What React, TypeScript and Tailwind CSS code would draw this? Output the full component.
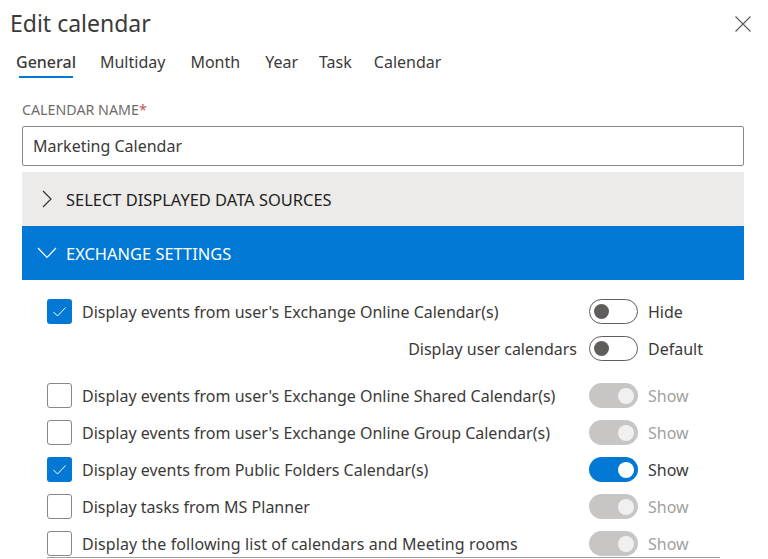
const tabs = [
  { name: "General", cls: "" },
  { name: "Multiday", cls: "ml-[24px]" },
  { name: "Month", cls: "ml-[25px]" },
  { name: "Year", cls: "ml-[25px]" },
  { name: "Task", cls: "ml-[21px]" },
  { name: "Calendar", cls: "ml-[22px]" },
];

const rows = [
  { label: "Display events from user's Exchange Online Shared Calendar(s)", state: "disabled" },
  { label: "Display events from user's Exchange Online Group Calendar(s)", state: "disabled" },
  { label: "Display events from Public Folders Calendar(s)", state: "on", checked: true },
  { label: "Display tasks from MS Planner", state: "disabled" },
  { label: "Display the following list of calendars and Meeting rooms", state: "disabled", cls: "tracking-[0.09px]" },
];

function Checkbox({ checked }: { checked?: boolean }) {
  if (checked) {
    return (
      <div className="flex h-[25px] w-[25px] shrink-0 items-center justify-center rounded-[3px] bg-[#0078d4]">
        <svg width="15" height="15" viewBox="0 0 15 15" fill="none" stroke="#fff" strokeWidth="1">
          <path d="M1.5 8 L5.5 12 L13.5 3.5" />
        </svg>
      </div>
    );
  }
  return <div className="h-[25px] w-[25px] shrink-0 rounded-[3px] border border-[#8a8886] bg-white" />;
}

function Toggle({ state, text }: { state: string; text: string }) {
  return (
    <div className="flex w-[155px] shrink-0 items-center gap-[10px]">
      {state === "off" && (
        <div className="flex h-[25px] w-[49px] items-center rounded-full border border-[#605e5c] bg-white pl-[4px]">
          <div className="h-[15px] w-[15px] rounded-full bg-[#605e5c]" />
        </div>
      )}
      {state === "on" && (
        <div className="flex h-[25px] w-[49px] items-center justify-end rounded-full bg-[#0078d4] pr-[4px]">
          <div className="h-[16px] w-[16px] rounded-full bg-white" />
        </div>
      )}
      {state === "disabled" && (
        <div className="flex h-[25px] w-[49px] items-center justify-end rounded-full bg-[#c8c6c4] pr-[4px]">
          <div className="h-[16px] w-[16px] rounded-full bg-[#f0f0f0]" />
        </div>
      )}
      <span className={state === "disabled" ? "text-[#a19f9d]" : "text-[#3b3a39]"}>{text}</span>
    </div>
  );
}

function Row({ label, state, text, checked, cls = "" }: { label: string; state: string; text: string; checked?: boolean; cls?: string }) {
  return (
    <div className="flex h-[37px] items-center">
      <Checkbox checked={checked} />
      <div className={`ml-[10px] flex-1 whitespace-nowrap text-[#3b3a39] ${cls}`}>{label}</div>
      <Toggle state={state} text={text} />
    </div>
  );
}

export default function App() {
  return (
    <div className="h-[559px] w-[768px] overflow-hidden bg-white font-['Noto_Sans',sans-serif] text-[#3b3a39]">
      <div className="flex h-[47px] items-center justify-between pl-[10px] pr-[17px]">
        <h1 className="text-[23px] leading-none">Edit calendar</h1>
        <svg width="16" height="16" viewBox="0 0 16 16" fill="none" stroke="#605e5c" strokeWidth="1.2">
          <path d="M0.5 0.5 L15.5 15.5 M15.5 0.5 L0.5 15.5" />
        </svg>
      </div>
      <div className="-mt-[2px] flex pl-[16px] text-[16px]">
        {tabs.map((t, i) => (
          <div key={t.name} className={`flex h-[34px] flex-col items-center justify-center ${t.cls}`}>
            <span className={i === 0 ? "relative font-medium" : ""}>
              {t.name}
              {i === 0 && <span className="absolute -bottom-[4px] left-[3px] right-[3px] h-[2px] bg-[#0078d4]" />}
            </span>
          </div>
        ))}
      </div>
      <div className="pl-[22px] pr-[24px]">
        <div className="mt-[21px] flex h-[20px] items-center text-[14.25px] text-[#6f6d6b]">
          CALENDAR NAME<span className="text-[#c4545a]">*</span>
        </div>
        <div className="mt-[6px] flex h-[40px] items-center rounded-[2px] border border-[#8a8886] pl-[10px] text-[16px]">
          Marketing Calendar
        </div>
        <div className="mt-[6px] flex h-[54px] items-center bg-[#edebe9] pl-[18px] text-[#201f1e]">
          <svg width="14" height="18" viewBox="0 0 14 18" fill="none" stroke="#323130" strokeWidth="1.2">
            <path d="M3 1 L11 9 L3 17" />
          </svg>
          <span className="ml-[12px] pt-[2px] text-[16.45px]">SELECT DISPLAYED DATA SOURCES</span>
        </div>
        <div className="flex h-[54px] items-center bg-[#0078d4] pl-[15px] text-white">
          <svg width="20" height="14" viewBox="0 0 20 14" fill="none" stroke="#fff" strokeWidth="1.2">
            <path d="M1 2 L10 11.5 L19 2" />
          </svg>
          <span className="ml-[9px] pt-[2px] text-[16.45px]">EXCHANGE SETTINGS</span>
        </div>
        <div className="pl-[25px] text-[16px]">
          <div className="mt-[13px]">
            <Row label="Display events from user's Exchange Online Calendar(s)" state="off" text="Hide" checked />
          </div>
          <div className="flex h-[37px] items-center justify-end">
            <span className="mr-[12px]">Display user calendars</span>
            <Toggle state="off" text="Default" />
          </div>
          <div className="mt-[10px]">
            {rows.map((r) => (
              <Row key={r.label} label={r.label} state={r.state} text="Show" checked={r.checked} cls={r.cls} />
            ))}
          </div>
          <div className="-mt-[5px] h-px w-[673px] bg-[#a19f9d]" />
        </div>
      </div>
    </div>
  );
}
